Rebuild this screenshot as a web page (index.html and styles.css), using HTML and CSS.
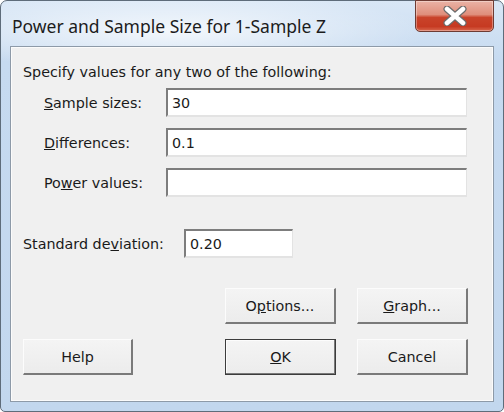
FILE: index.html
```html
<!DOCTYPE html>
<html lang="en">
<head>
    <meta charset="UTF-8">
    <title>Power and Sample Size for 1-Sample Z</title>
    <link rel="stylesheet" href="styles.css">
</head>
<body>
    <div class="window">
        <div class="titlebar">
            <span class="title">Power and Sample Size for 1-Sample Z</span>
            <div class="close">
                <svg width="28" height="20" viewBox="0 0 28 20">
                    <path d="M6 3 L22 17 M22 3 L6 17" stroke="#6b6b6b" stroke-width="7" stroke-linecap="round" fill="none"/>
                    <path d="M6 3 L22 17 M22 3 L6 17" stroke="#ffffff" stroke-width="4.6" stroke-linecap="round" fill="none"/>
                </svg>
            </div>
        </div>
        <div class="client">
            <p class="intro">Specify values for any two of the following:</p>
            <div class="fields">
                <label for="sizes"><u>S</u>ample sizes:</label>
                <input id="sizes" type="text" value="30">
                <label for="diffs"><u>D</u>ifferences:</label>
                <input id="diffs" type="text" value="0.1">
                <label for="power">Po<u>w</u>er values:</label>
                <input id="power" type="text" value="">
            </div>
            <div class="stdev">
                <label for="sd">Standard de<u>v</u>iation:</label>
                <input id="sd" type="text" value="0.20">
            </div>
            <div class="buttons">
                <button type="button" class="col2">O<u>p</u>tions...</button>
                <button type="button"><u>G</u>raph...</button>
                <button type="button" class="help">Help</button>
                <button type="button" class="default"><u>O</u>K</button>
                <button type="button">Cancel</button>
            </div>
        </div>
    </div>
</body>
</html>
```

FILE: styles.css
```css
body {
    margin: 0;
    background-color: #fff;
    font-family: "DejaVu Sans", Tahoma, sans-serif;
}
.window {
    width: 504px;
    height: 412px;
    box-sizing: border-box;
    border: 1px solid #5e6c7a;
    border-radius: 7px 7px 5px 5px;
    background: radial-gradient(ellipse 260px 40px at 170px 30px, rgba(255, 255, 255, 0.75), rgba(255, 255, 255, 0)),
        linear-gradient(#d9e7f6, #c6daf0 60px, #c2d7ee);
    padding: 0 9px 9px 9px;
    display: flex;
    flex-direction: column;
}
.titlebar {
    height: 45px;
    display: flex;
    align-items: flex-start;
    justify-content: space-between;
}
.title {
    margin: 13px 0 0 2px;
    font-family: "Noto Sans", sans-serif;
    font-size: 17.5px;
    color: #1c1c1c;
}
.close {
    width: 79px;
    height: 32px;
    box-sizing: border-box;
    margin-top: -1px;
    border: 1px solid #6e3b33;
    border-radius: 0 0 5px 5px;
    background: linear-gradient(#eab3a6, #df8e7b 45%, #c9432a 55%, #c63a22 85%, #d8674d);
    box-shadow: inset 0 0 0 1px rgba(255, 255, 255, 0.35);
    display: flex;
    align-items: center;
    justify-content: center;
}
.client {
    flex: 1;
    background-color: #f0f0f0;
    border: 1px solid #8d9aa8;
    box-shadow: inset 0 0 0 1px #fbfbfb;
    padding: 0 0 0 12px;
    font-size: 14.3px;
    color: #1a1a1a;
}
.intro {
    margin: 16px 0 0 0;
    line-height: 18px;
}
.fields {
    display: grid;
    grid-template-columns: 122px 301px;
    row-gap: 11px;
    align-items: center;
    margin: 7px 0 0 21px;
}
.stdev {
    display: grid;
    grid-template-columns: 161px 109px;
    align-items: center;
    margin-top: 32px;
}
input {
    height: 29px;
    box-sizing: border-box;
    border-style: solid;
    border-width: 2px 1px 2px 2px;
    border-color: #7d7d7d #e3e3e3 #e3e3e3 #7d7d7d;
    background-color: #fff;
    padding: 0 4px;
    font-family: "DejaVu Sans", Tahoma, sans-serif;
    font-size: 14.3px;
    color: #1a1a1a;
    outline: none;
}
.buttons {
    display: grid;
    grid-template-columns: 181px 111px 111px;
    grid-auto-rows: 36px;
    column-gap: 21px;
    row-gap: 15px;
    margin-top: 30px;
}
.col2 {
    grid-column: 2;
}
button {
    box-sizing: border-box;
    border-style: solid;
    border-width: 1px 2px 2px 1px;
    border-color: #fcfcfc #7a7a7a #7a7a7a #fcfcfc;
    background: linear-gradient(#f4f4f4, #ececec);
    font-family: "DejaVu Sans", Tahoma, sans-serif;
    font-size: 14.3px;
    color: #1a1a1a;
    padding: 0;
}
.help {
    width: 110px;
}
.default {
    border: 1px solid #3c3c3c;
    box-shadow: inset -1px -1px 0 #7a7a7a, inset 1px 1px 0 #fcfcfc;
}
```
